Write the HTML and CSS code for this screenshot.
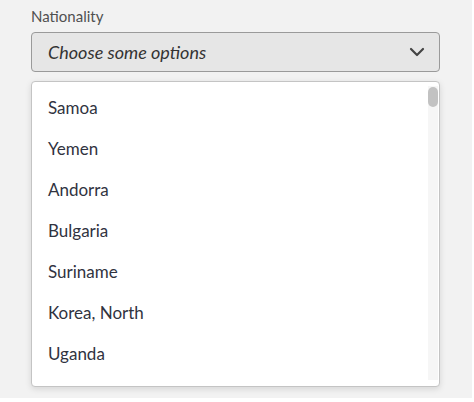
FILE: index.html
```html
<!DOCTYPE html>
<html>
<head>
<meta charset="utf-8">
<link rel="stylesheet" href="styles.css">
</head>
<body>
<div class="page">
  <div class="label">Nationality</div>
  <div class="select">
    <span class="placeholder">Choose some options</span>
    <svg class="chevron" width="16" height="10" viewBox="0 0 16 10"><path d="M2 2 L8 8 L14 2" fill="none" stroke="#444" stroke-width="2.2" stroke-linecap="round" stroke-linejoin="round"/></svg>
  </div>
  <div class="menu">
    <ul class="options">
      <li>Samoa</li>
      <li>Yemen</li>
      <li>Andorra</li>
      <li>Bulgaria</li>
      <li>Suriname</li>
      <li>Korea, North</li>
      <li>Uganda</li>
    </ul>
    <div class="track"><div class="thumb"></div></div>
  </div>
</div>
</body>
</html>
```
FILE: styles.css
```css
html, body {
  margin: 0;
  padding: 0;
  background: #ffffff;
}
.page {
  width: 441px;
  height: 391px;
  background: #f2f2f2;
  padding: 7px 0 0 31px;
  font-family: Lato, "Liberation Sans", sans-serif;
  color: #31333f;
}
.label {
  font-size: 15px;
  line-height: 18px;
  color: #505050;
  height: 25px;
}
.select {
  box-sizing: border-box;
  width: 409px;
  height: 40px;
  border: 1px solid #9a9a9a;
  border-radius: 4px;
  background: #e6e6e6;
  display: flex;
  align-items: center;
  justify-content: space-between;
  padding: 0 14px 0 16px;
}
.placeholder {
  font-style: italic;
  font-size: 18px;
  color: #333;
}
.chevron {
  display: block;
}
.menu {
  position: relative;
  box-sizing: border-box;
  margin-top: 9px;
  width: 409px;
  height: 306px;
  background: #fff;
  border: 1px solid #c4c4c4;
  border-radius: 4px;
  box-shadow: 0 2px 6px rgba(0,0,0,0.12);
  overflow: hidden;
}
.options {
  list-style: none;
  margin: 0;
  padding: 5px 0 0 0;
}
.options li {
  height: 41px;
  line-height: 41px;
  padding-left: 16px;
  font-size: 17px;
  color: #31333f;
}
.track {
  position: absolute;
  top: 4px;
  right: 1px;
  width: 10px;
  bottom: 6px;
  background: #f6f6f6;
}
.thumb {
  margin-top: 1px;
  width: 10px;
  height: 20px;
  border-radius: 5px;
  background: #c2c2c2;
}
```
